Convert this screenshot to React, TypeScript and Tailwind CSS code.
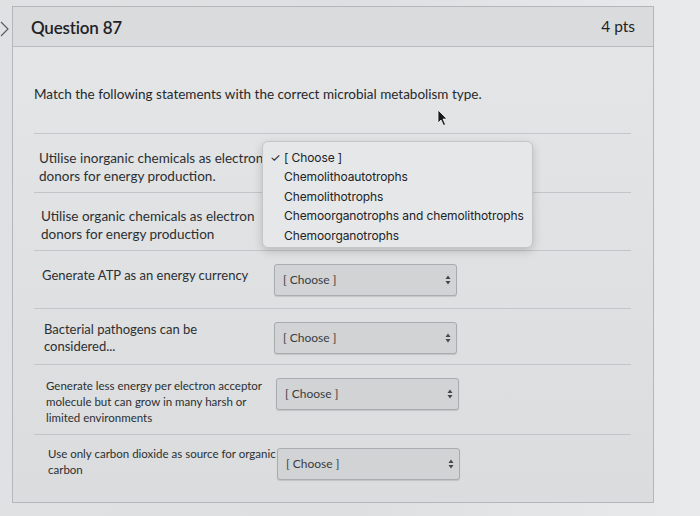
import React from 'react';

interface MatchRow {
  text: string[];
  height: string;
  textClass: string;
  selectClass: string;
  hideSelect?: boolean;
}

const rows: MatchRow[] = [
  {
    text: ['Utilise inorganic chemicals as electron', 'donors for energy production.'],
    height: 'h-[59px]',
    textClass: 'pl-[5px] pt-[15px] text-[13.5px] leading-[18px]',
    selectClass: 'ml-[10px] mt-[9px]',
    hideSelect: true,
  },
  {
    text: ['Utilise organic chemicals as electron', 'donors for energy production'],
    height: 'h-[58px]',
    textClass: 'pl-[7px] pt-[14px] text-[13.5px] leading-[18px]',
    selectClass: 'ml-[10px] mt-[9px]',
    hideSelect: true,
  },
  {
    text: ['Generate ATP as an energy currency'],
    height: 'h-[58px]',
    textClass: 'pl-[8px] pt-[15px] text-[13px] leading-[18px]',
    selectClass: 'ml-[0px] mt-[13px]',
  },
  {
    text: ['Bacterial pathogens can be', 'considered...'],
    height: 'h-[56px]',
    textClass: 'pl-[10px] pt-[12px] text-[13px] leading-[17px]',
    selectClass: 'ml-[0px] mt-[13px]',
  },
  {
    text: ['Generate less energy per electron acceptor', 'molecule but can grow in many harsh or', 'limited environments'],
    height: 'h-[70px]',
    textClass: 'pl-[12px] pt-[13px] text-[11.5px] leading-[16px]',
    selectClass: 'ml-[2px] mt-[13px]',
  },
  {
    text: ['Use only carbon dioxide as source for organic', 'carbon'],
    height: 'h-[66px]',
    textClass: 'pl-[14px] pt-[11px] text-[11.5px] leading-[16px]',
    selectClass: 'ml-[3px] mt-[13px]',
  },
];

const options = [
  'Chemolithoautotrophs',
  'Chemolithotrophs',
  'Chemoorganotrophs and chemolithotrophs',
  'Chemoorganotrophs',
];

const SelectBox = ({ className }: { className: string }) => (
  <div
    className={`${className} flex h-[32px] w-[183px] shrink-0 items-center justify-between rounded-[3px] border border-[#a9acaf] bg-[#d1d3d5] pl-[8px] pr-[5px] shadow-[0_1px_1px_rgba(0,0,0,0.12)]`}
  >
    <span className="text-[12px] text-[#3a3d40]">[ Choose ]</span>
    <svg width="6" height="10" viewBox="0 0 6 10">
      <path d="M3 0.5 L5.5 4 L0.5 4 Z" fill="#45484b" />
      <path d="M3 9.5 L5.5 6 L0.5 6 Z" fill="#45484b" />
    </svg>
  </div>
);

export default function App() {
  return (
    <div
      className="relative flex h-[516px] w-[700px] overflow-hidden bg-gradient-to-r from-[#dfe1e2] via-[#dddfe0] to-[#e9eaeb] text-[#2c2f32]"
      style={{ fontFamily: 'Lato, "Open Sans", sans-serif' }}
    >
      <div className="flex w-[12px] shrink-0 items-start pt-[21px]">
        <svg width="10" height="16" viewBox="0 0 10 16">
          <path d="M1 1 L8 8 L1 15" fill="none" stroke="#5a5d60" strokeWidth="1.2" />
        </svg>
      </div>

      <div className="relative mt-[6px] flex h-[497px] w-[642px] shrink-0 flex-col border border-[#b4b7ba] bg-gradient-to-b from-[#e4e6e7] to-[#dadcdd]">
        <div className="flex h-[40px] shrink-0 items-center justify-between border-b border-[#b9bcbf] bg-[#d9dbdd] pl-[18px] pr-[18px]">
          <span className="pt-[2px] text-[17px] font-semibold tracking-[-0.2px] text-[#1f2225]">Question 87</span>
          <span className="text-[15.5px] text-[#1f2225]">4 pts</span>
        </div>

        <div className="flex flex-col pl-[21px] pr-[22px]">
          <p className="pt-[38px] text-[13.5px] leading-[18px] text-[#26292c]">
            Match the following statements with the correct microbial metabolism type.
          </p>
          <div className="mt-[30px] flex flex-col">
            {rows.map((row, i) => (
              <div key={i} className={`${row.height} flex border-t border-[#c3c6c9]`}>
                <div className={`${row.textClass} w-[240px] shrink-0 whitespace-nowrap text-[#2c2f32]`}>
                  {row.text.map((line) => (
                    <div key={line}>{line}</div>
                  ))}
                </div>
                {row.hideSelect ? null : <SelectBox className={row.selectClass} />}
              </div>
            ))}
          </div>
        </div>

        <div
          className="absolute left-[249px] top-[134px] flex h-[107px] w-[271px] flex-col whitespace-nowrap rounded-[6px] border border-[#c4c6c8] bg-[#e6e7e8] pt-[6px] text-[12px] tracking-[-0.1px] text-[#202326] shadow-[0_3px_10px_rgba(0,0,0,0.18)]"
          style={{ fontFamily: 'Inter, "Noto Sans", sans-serif' }}
        >
          <div className="flex h-[19.5px] items-center pl-[7px]">
            <span className="w-[14px] text-[12px]">✓</span>
            <span>[ Choose ]</span>
          </div>
          {options.map((o) => (
            <div key={o} className="flex h-[19.5px] items-center pl-[21px]">
              {o}
            </div>
          ))}
        </div>

        <svg className="absolute left-[424px] top-[102px]" width="12" height="18" viewBox="0 0 12 18">
          <path d="M1 1 L1 14 L4 11 L6.5 16.5 L8.5 15.5 L6 10 L10 10 Z" fill="#1a1a1a" stroke="#f4f4f4" strokeWidth="0.8" />
        </svg>
      </div>
    </div>
  );
}
